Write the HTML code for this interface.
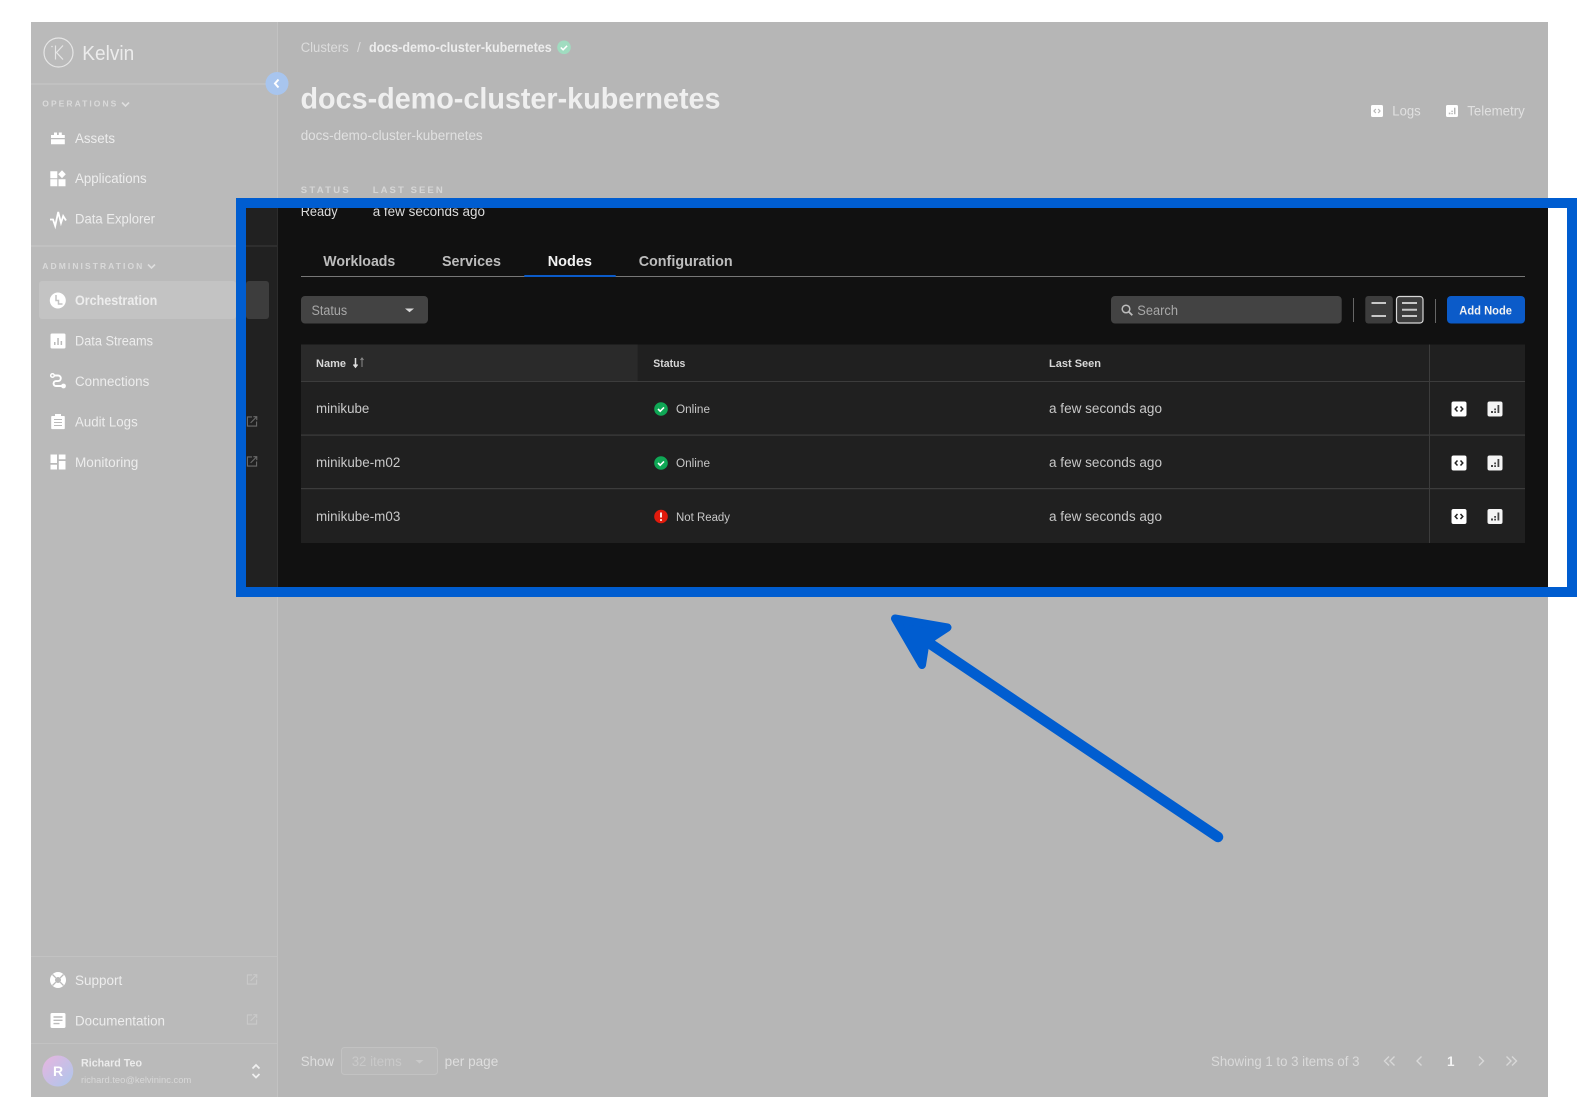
<!DOCTYPE html>
<html lang="en">
<head>
<meta charset="utf-8">
<title>docs-demo-cluster-kubernetes</title>
<style>
html,body{margin:0;padding:0;background:#fff;width:1580px;height:1120px;overflow:hidden}
svg{display:block}
text{font-family:"Liberation Sans",sans-serif;white-space:pre}
.s{font-size:13.5px;fill:#ededed}
.b{font-weight:bold}
.lab{font-size:8.5px;font-weight:bold;fill:#dadada}
</style>
</head>
<body>
<svg width="1580" height="1120" viewBox="0 0 1580 1120" xmlns="http://www.w3.org/2000/svg">
<defs>
<symbol id="code" viewBox="0 0 15 15"><rect width="15" height="15" rx="2" fill="#fff"/><path d="M6 5 3.7 7.5 6 10M9 5l2.300 2.500L9 10" fill="none" stroke="#222" stroke-width="1.500"/></symbol>
<symbol id="chart" viewBox="0 0 15 15"><rect width="15" height="15" rx="2" fill="#f4f4f4"/><path d="M3.500 9.500h2v2h-2zM6.700 7h1.800v1.700H6.700zM6.700 9.800h1.800v1.700H6.700zM10 3.500h1.800v8H10z" fill="#444"/></symbol>
<symbol id="codeL" viewBox="0 0 15 15"><rect width="15" height="15" rx="2" fill="#fff"/><path d="M6 5 3.700 7.500 6 10M9 5l2.300 2.500L9 10" fill="none" stroke="#b6b6b6" stroke-width="1.500"/></symbol>
<symbol id="chartL" viewBox="0 0 15 15"><rect width="15" height="15" rx="2" fill="#fff"/><path d="M3.500 9.500h2v2h-2zM6.700 7h1.800v1.700H6.700zM6.700 9.800h1.800v1.700H6.700zM10 3.500h1.800v8H10z" fill="#b6b6b6"/></symbol>
<symbol id="ext" viewBox="0 0 12 12"><path d="M6 1H1v10h10V6" fill="none" stroke="currentColor" stroke-width="1.200"/><path d="M4.500 7.500 11 1M7.500 .8h3.700v3.700" fill="none" stroke="currentColor" stroke-width="1.200"/></symbol>
</defs>

<!-- page base -->
<rect x="31" y="22" width="1517" height="1075" fill="#b6b6b6"/>
<rect x="31" y="22" width="246" height="1075" fill="#bababa"/>
<rect x="277" y="22" width="1" height="1075" fill="#c2c2c2"/>

<!-- dark spotlight -->
<rect x="246" y="208" width="1302" height="379" fill="#111"/>
<rect x="246" y="208" width="31" height="379" fill="#212121"/>
<rect x="277" y="208" width="1" height="379" fill="#2c2c2c"/>
<rect x="246" y="245" width="31" height="2" fill="#2e2e2e"/>
<rect x="246" y="281" width="23" height="38" rx="3" fill="#3d3d3d"/>

<!-- sidebar -->
<rect x="31" y="83" width="246" height="2" fill="#c1c1c1"/>
<rect x="31" y="245" width="205" height="2" fill="#c1c1c1"/>
<rect x="39" y="281" width="197" height="38" rx="3" fill="#c3c3c3"/>
<rect x="31" y="956" width="246" height="1" fill="#c2c2c2"/>
<rect x="31" y="1043" width="246" height="1" fill="#c2c2c2"/>

<circle cx="58.500" cy="52.500" r="14.500" fill="none" stroke="#e6e6e6" stroke-width="1.200"/>
<path d="M55.500 45.500v14M63 45.500l-6.500 7 6.500 7" fill="none" stroke="#e6e6e6" stroke-width="1.200"/>
<circle cx="52" cy="46.500" r=".8" fill="#e6e6e6"/>
<text x="82.300" y="60" font-size="20.500" fill="#ececec" textLength="52" lengthAdjust="spacingAndGlyphs">Kelvin</text>
<circle cx="277" cy="83.500" r="11.500" fill="#a8c5ee"/>
<path d="M278.500 79.500 275 83.500l3.500 4" fill="none" stroke="#fff" stroke-width="2"/>

<text class="lab" x="42.300" y="106.500" textLength="74">OPERATIONS</text>
<path d="M122 102.500l3.500 3.500 3.500-3.500" fill="none" stroke="#dedede" stroke-width="1.600"/>

<path d="M51 138v-3h3v-2.500h3v2.500h1.800v-2.500h3v2.500h3v3zM51 139.300h13.800v5H51z" fill="#fff"/>
<text class="s" x="75" y="143" textLength="40" lengthAdjust="spacingAndGlyphs">Assets</text>

<path d="M50.300 171.300h7v7h-7zM50.300 179.300h7v7h-7zM58.500 179.300h7v7h-7zM62 170.300l3.800 4-3.800 4-3.800-4z" fill="#fff"/>
<text class="s" x="75" y="183" textLength="71.700" lengthAdjust="spacingAndGlyphs">Applications</text>

<path d="M50 219.500h3l2.200 6.500 3-14 2.800 11 2.200-7 2.800 4.500" fill="none" stroke="#fff" stroke-width="1.800"/>
<text class="s" x="75" y="223.500" textLength="80" lengthAdjust="spacingAndGlyphs">Data Explorer</text>

<text class="lab" x="42.300" y="269" textLength="100">ADMINISTRATION</text>
<path d="M148 264.500l3.500 3.500 3.500-3.500" fill="none" stroke="#dedede" stroke-width="1.600"/>

<circle cx="57.800" cy="300.500" r="8" fill="#fff"/>
<path d="M56 295v5.500h2.500v3.500h4" fill="none" stroke="#c3c3c3" stroke-width="1.500"/>
<text class="s b" x="75" y="305" textLength="82.300" lengthAdjust="spacingAndGlyphs">Orchestration</text>

<rect x="50.500" y="333.500" width="15" height="15" rx="1.500" fill="#fff"/>
<path d="M54 342h1.500v3H54zM57.300 338h1.500v7h-1.500zM60.600 341h1.500v4h-1.500z" fill="#bababa"/>
<text class="s" x="75" y="345.500" textLength="78" lengthAdjust="spacingAndGlyphs">Data Streams</text>

<circle cx="52.500" cy="375.500" r="1.800" fill="none" stroke="#fff" stroke-width="1.500"/>
<circle cx="63.500" cy="386" r="2.400" fill="#fff"/>
<path d="M54.500 375.500h3.500a2.800 2.800 0 0 1 0 5.600h-2a2.300 2.300 0 0 0 0 4.900h6" fill="none" stroke="#fff" stroke-width="1.900"/>
<text class="s" x="75" y="386" textLength="74.300" lengthAdjust="spacingAndGlyphs">Connections</text>

<path d="M52 416h3v-2h6v2h3a.8.800 0 0 1 .8.800v11.500a.8.800 0 0 1-.8.800H52a.8.800 0 0 1-.8-.800v-11.500a.8.800 0 0 1 .8-.8z" fill="#fff"/>
<path d="M54 419.500h8M54 422.500h8M54 425.500h8" stroke="#bababa" stroke-width="1.100"/>
<text class="s" x="75" y="426.500" textLength="62.700" lengthAdjust="spacingAndGlyphs">Audit Logs</text>
<use href="#ext" x="246.500" y="416" width="11" height="11" color="#6a6a6a"/>

<path d="M50.500 454.500h6.500v8.500h-6.500zM50.500 464.800h6.500v4.700h-6.500zM58.800 454.500h6.700v4.700h-6.700zM58.800 461h6.700v8.500h-6.700z" fill="#fff"/>
<text class="s" x="75" y="467" textLength="63.300" lengthAdjust="spacingAndGlyphs">Monitoring</text>
<use href="#ext" x="246.500" y="456" width="11" height="11" color="#6a6a6a"/>

<circle cx="58" cy="980" r="8" fill="#fff"/>
<circle cx="58" cy="980" r="3" fill="#bababa"/>
<path d="M52.500 974.500l3.300 3.300M63.500 974.500l-3.300 3.300M52.500 985.500l3.300-3.300M63.500 985.500l-3.300-3.300" stroke="#bababa" stroke-width="1.300"/>
<text class="s" x="75" y="985" textLength="47.300" lengthAdjust="spacingAndGlyphs">Support</text>
<use href="#ext" x="246.500" y="974" width="11" height="11" color="#c9c9c9"/>

<rect x="50.500" y="1013" width="15" height="15" rx="1.500" fill="#fff"/>
<path d="M53.500 1017h9M53.500 1020.300h9M53.500 1023.600h6" stroke="#bababa" stroke-width="1.400"/>
<text class="s" x="75" y="1025.500" textLength="90" lengthAdjust="spacingAndGlyphs">Documentation</text>
<use href="#ext" x="246.500" y="1014" width="11" height="11" color="#c9c9c9"/>

<linearGradient id="av" x1="0" y1="0" x2="1" y2="1"><stop offset="0" stop-color="#e8b5df"/><stop offset="1" stop-color="#abc7ec"/></linearGradient>
<circle cx="57.800" cy="1071" r="15.500" fill="url(#av)"/>
<text x="53" y="1076" font-size="14" font-weight="bold" fill="#fff">R</text>
<text x="81" y="1066.500" font-size="11" font-weight="bold" fill="#ececec" textLength="61" lengthAdjust="spacingAndGlyphs">Richard Teo</text>
<text x="81" y="1083" font-size="9" fill="#d8d8d8" textLength="110.300" lengthAdjust="spacingAndGlyphs">richard.teo@kelvininc.com</text>
<path d="M252.500 1068.500l3.500-3.500 3.500 3.500M252.500 1074l3.500 3.500 3.500-3.500" fill="none" stroke="#f0f0f0" stroke-width="1.700"/>

<!-- header -->
<text x="300.700" y="52" font-size="13.500" fill="#dcdcdc" textLength="48" lengthAdjust="spacingAndGlyphs">Clusters</text>
<text x="357" y="52" font-size="13.500" fill="#dcdcdc">/</text>
<text x="369" y="52" font-size="13.500" font-weight="bold" fill="#ededed" textLength="182.700" lengthAdjust="spacingAndGlyphs">docs-demo-cluster-kubernetes</text>
<circle cx="564" cy="47.300" r="6.800" fill="#a0dcc0"/>
<path d="M560.800 47.500l2.300 2.300 4-4" fill="none" stroke="#fff" stroke-width="1.500"/>
<text x="300.500" y="108.500" font-size="30" font-weight="bold" fill="#efefef" textLength="420" lengthAdjust="spacingAndGlyphs">docs-demo-cluster-kubernetes</text>
<text x="300.700" y="140" font-size="13.500" fill="#e0e0e0" textLength="182" lengthAdjust="spacingAndGlyphs">docs-demo-cluster-kubernetes</text>
<text x="300.700" y="193" font-size="9.500" font-weight="bold" fill="#d6d6d6" textLength="48">STATUS</text>
<text x="372.700" y="193" font-size="9.500" font-weight="bold" fill="#d6d6d6" textLength="70">LAST SEEN</text>

<use href="#codeL" x="1371" y="105" width="12" height="12"/>
<text x="1392.300" y="115.500" font-size="13.500" fill="#e0e0e0" textLength="28.400" lengthAdjust="spacingAndGlyphs">Logs</text>
<use href="#chartL" x="1446" y="105" width="12" height="12"/>
<text x="1467.300" y="115.500" font-size="13.500" fill="#e0e0e0" textLength="57.500" lengthAdjust="spacingAndGlyphs">Telemetry</text>

<!-- status values -->
<text x="300.700" y="216" font-size="13.500" fill="#dcdcdc" textLength="37" lengthAdjust="spacingAndGlyphs">Ready</text>
<text x="372.700" y="216" font-size="13.500" fill="#dcdcdc" textLength="112.300" lengthAdjust="spacingAndGlyphs">a few seconds ago</text>

<!-- tabs -->
<rect x="301" y="276" width="1224" height="1" fill="#777"/>
<rect x="524.300" y="275" width="91.400" height="2" fill="#0b5bc9"/>
<text x="323.300" y="266" font-size="15" font-weight="bold" fill="#bdbdbd" textLength="72" lengthAdjust="spacingAndGlyphs">Workloads</text>
<text x="442" y="266" font-size="15" font-weight="bold" fill="#bdbdbd" textLength="59" lengthAdjust="spacingAndGlyphs">Services</text>
<text x="547.700" y="266" font-size="15" font-weight="bold" fill="#f2f2f2" textLength="44.300" lengthAdjust="spacingAndGlyphs">Nodes</text>
<text x="638.700" y="266" font-size="15" font-weight="bold" fill="#bdbdbd" textLength="94" lengthAdjust="spacingAndGlyphs">Configuration</text>

<!-- toolbar -->
<rect x="301" y="296" width="127" height="27.500" rx="4" fill="#434343"/>
<text x="311.500" y="315" font-size="13.500" fill="#a8a8a8" textLength="35.600" lengthAdjust="spacingAndGlyphs">Status</text>
<path d="M405 308.500h9l-4.500 3.800z" fill="#d8d8d8"/>

<rect x="1111" y="296" width="230.700" height="27.500" rx="4" fill="#434343"/>
<circle cx="1126" cy="309" r="3.800" fill="none" stroke="#bdbdbd" stroke-width="1.500"/>
<path d="M1128.700 311.700l3.600 3.600" stroke="#bdbdbd" stroke-width="1.800"/>
<text x="1137.300" y="315" font-size="13.500" fill="#a8a8a8" textLength="40.700" lengthAdjust="spacingAndGlyphs">Search</text>
<rect x="1353" y="298" width="1" height="24" fill="#666"/>
<rect x="1365.300" y="296" width="27.500" height="27.500" rx="3" fill="#3d3d3d"/>
<path d="M1371.500 303h14.500M1371.500 316h14.500" stroke="#c8c8c8" stroke-width="2"/>
<rect x="1396.500" y="296.500" width="26.500" height="26.500" rx="3" fill="#3d3d3d" stroke="#d8d8d8" stroke-width="1.200"/>
<path d="M1402 303h15M1402 309.700h15M1402 316h15" stroke="#c8c8c8" stroke-width="2"/>
<rect x="1435" y="299" width="1" height="24" fill="#666"/>
<rect x="1447" y="296" width="78" height="27.500" rx="4" fill="#0b5bc9"/>
<text x="1459.300" y="314.500" font-size="11.500" font-weight="bold" fill="#f2f2f2" textLength="52.700" lengthAdjust="spacingAndGlyphs">Add Node</text>

<!-- table -->
<rect x="301" y="344.500" width="1224" height="198.500" fill="#202020"/>
<rect x="301" y="344.500" width="336.700" height="36.500" fill="#2a2a2a"/>
<rect x="301" y="381" width="1224" height="1" fill="#3c3c3c"/>
<rect x="301" y="434.500" width="1224" height="1.200" fill="#3c3c3c"/>
<rect x="301" y="488" width="1224" height="1.200" fill="#3c3c3c"/>
<rect x="1429" y="344.500" width="1" height="198.500" fill="#3c3c3c"/>

<text x="316" y="367" font-size="11" font-weight="bold" fill="#d8d8d8" textLength="30" lengthAdjust="spacingAndGlyphs">Name</text>
<path d="M355.500 358v9M353.500 364.500l2 2.500 2-2.500" fill="none" stroke="#e0e0e0" stroke-width="1.500"/>
<path d="M362 367v-9M360.500 360l1.500-2 1.500 2" fill="none" stroke="#8a8a8a" stroke-width="1"/>
<text x="653.300" y="367" font-size="11" font-weight="bold" fill="#d8d8d8" textLength="32" lengthAdjust="spacingAndGlyphs">Status</text>
<text x="1049" y="367" font-size="11" font-weight="bold" fill="#d8d8d8" textLength="52" lengthAdjust="spacingAndGlyphs">Last Seen</text>

<text x="316" y="413" font-size="13.500" fill="#c8c8c8" textLength="53.300" lengthAdjust="spacingAndGlyphs">minikube</text>
<circle cx="661" cy="409" r="6.800" fill="#0fa755"/>
<path d="M658 409l2.200 2.200 3.800-3.800" fill="none" stroke="#fff" stroke-width="1.600"/>
<text x="676" y="413" font-size="11.500" fill="#c8c8c8" textLength="34" lengthAdjust="spacingAndGlyphs">Online</text>
<text x="1049" y="413" font-size="13.500" fill="#c8c8c8" textLength="113" lengthAdjust="spacingAndGlyphs">a few seconds ago</text>
<use href="#code" x="1451.500" y="401.500" width="15" height="15"/>
<use href="#chart" x="1487.500" y="401.500" width="15" height="15"/>

<text x="316" y="467" font-size="13.500" fill="#c8c8c8" textLength="84.300" lengthAdjust="spacingAndGlyphs">minikube-m02</text>
<circle cx="661" cy="463" r="6.800" fill="#0fa755"/>
<path d="M658 463l2.200 2.200 3.800-3.800" fill="none" stroke="#fff" stroke-width="1.600"/>
<text x="676" y="467" font-size="11.500" fill="#c8c8c8" textLength="34" lengthAdjust="spacingAndGlyphs">Online</text>
<text x="1049" y="467" font-size="13.500" fill="#c8c8c8" textLength="113" lengthAdjust="spacingAndGlyphs">a few seconds ago</text>
<use href="#code" x="1451.500" y="455.500" width="15" height="15"/>
<use href="#chart" x="1487.500" y="455.500" width="15" height="15"/>

<text x="316" y="521" font-size="13.500" fill="#c8c8c8" textLength="84.300" lengthAdjust="spacingAndGlyphs">minikube-m03</text>
<circle cx="661" cy="516.500" r="6.800" fill="#e01a0c"/>
<path d="M661 512.500v5" stroke="#fff" stroke-width="1.800"/>
<circle cx="661" cy="520" r="1" fill="#fff"/>
<text x="676" y="521" font-size="11.500" fill="#c8c8c8" textLength="54" lengthAdjust="spacingAndGlyphs">Not Ready</text>
<text x="1049" y="521" font-size="13.500" fill="#c8c8c8" textLength="113" lengthAdjust="spacingAndGlyphs">a few seconds ago</text>
<use href="#code" x="1451.500" y="509" width="15" height="15"/>
<use href="#chart" x="1487.500" y="509" width="15" height="15"/>

<!-- footer -->
<text x="300.700" y="1066" font-size="13.500" fill="#dedede" textLength="33.300" lengthAdjust="spacingAndGlyphs">Show</text>
<rect x="341.500" y="1047.500" width="96" height="27" rx="3" fill="#b9b9b9" stroke="#c2c2c2"/>
<text x="351.700" y="1066" font-size="13.500" fill="#c9c9c9" textLength="50" lengthAdjust="spacingAndGlyphs">32 items</text>
<path d="M415.500 1060h8l-4 3.500z" fill="#c9c9c9"/>
<text x="444.700" y="1066" font-size="13.500" fill="#dedede" textLength="53.600" lengthAdjust="spacingAndGlyphs">per page</text>
<text x="1211" y="1066" font-size="13.500" fill="#dadada" textLength="148.500" lengthAdjust="spacingAndGlyphs">Showing 1 to 3 items of 3</text>
<path d="M1389 1056.500l-4.500 4.500 4.500 4.500M1394.500 1056.500l-4.500 4.500 4.500 4.500M1421.500 1056.500l-4.500 4.500 4.500 4.500M1479 1056.500l4.500 4.500-4.500 4.500M1506.500 1056.500l4.500 4.500-4.500 4.500M1512 1056.500l4.500 4.500-4.500 4.500" fill="none" stroke="#d8d8d8" stroke-width="1.400"/>
<text x="1447" y="1066" font-size="13.500" font-weight="bold" fill="#f4f4f4">1</text>

<!-- annotation frame -->
<rect x="241" y="203" width="1331" height="389" fill="none" stroke="#005dd0" stroke-width="10"/>
<path d="M1218 837 932 645" fill="none" stroke="#005dd0" stroke-width="10.500" stroke-linecap="round"/>
<path d="M895 618.500 947.500 627.500 933 637 925 646 922 665z" fill="#005dd0" stroke="#005dd0" stroke-width="8" stroke-linejoin="round"/>
</svg>
</body>
</html>
